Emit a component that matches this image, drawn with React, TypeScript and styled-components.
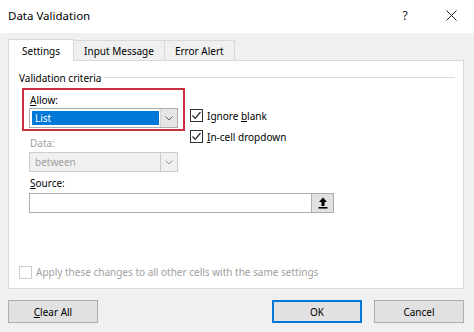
import * as React from 'react';
import styled, { createGlobalStyle, css } from 'styled-components';

const GlobalStyle = createGlobalStyle`
  html, body {
    margin: 0;
    padding: 0;
    background: #f0f0f0;
  }
  body {
    font-family: 'Noto Sans', 'Open Sans', sans-serif;
    font-size: 10px;
    color: #000;
  }
`;

const Window = styled.div`
  width: 474px;
  height: 332px;
  display: flex;
  flex-direction: column;
  background: #f0f0f0;
  overflow: hidden;
`;

const TitleBar = styled.div`
  height: 33px;
  background: #fff;
  display: flex;
  align-items: center;
  padding: 0 0 2px 8px;
  box-sizing: border-box;
`;

const Title = styled.div`
  flex: 1;
  font-size: 11.5px;
`;

const TitleButton = styled.div`
  width: 46px;
  display: flex;
  justify-content: center;
  align-items: center;
  font-size: 12px;
  color: #222;
`;

const Body = styled.div`
  flex: 1;
  display: flex;
  flex-direction: column;
  padding: 5px 10px 0 8px;
`;

const TabRow = styled.div`
  display: flex;
  align-items: flex-end;
  height: 22px;
`;

const Tab = styled.div<{ active?: boolean }>`
  box-sizing: border-box;
  height: ${p => (p.active ? 22 : 20)}px;
  padding: 0 ${p => (p.active ? 13 : 10)}px;
  display: flex;
  align-items: center;
  border: 1px solid #d9d9d9;
  border-bottom: none;
  background: ${p => (p.active ? '#fff' : '#f0f0f0')};
  margin-bottom: ${p => (p.active ? -1 : 0)}px;
  position: relative;
  z-index: ${p => (p.active ? 1 : 0)};
  ${p =>
    !p.active &&
    css`
      border-left: none;
    `}
`;

const Panel = styled.div`
  box-sizing: border-box;
  height: 229px;
  background: #fff;
  border: 1px solid #d9d9d9;
  padding: 9px 8px 8px 10px;
  display: flex;
  flex-direction: column;
`;

const GroupHeader = styled.div`
  display: flex;
  align-items: center;
  gap: 3px;
  line-height: 16px;
`;

const Rule = styled.div`
  flex: 1;
  height: 1px;
  background: #dcdcdc;
  margin-top: -1px;
`;

const CriteriaRow = styled.div`
  display: flex;
  align-items: flex-start;
  margin-top: 2px;
  padding-left: 3px;
`;

const Annotation = styled.div`
  box-sizing: border-box;
  width: 163px;
  border: 2px solid #c8303f;
  padding: 2px 5px 1px 5px;
`;

const FieldLabel = styled.div<{ disabled?: boolean }>`
  line-height: 16px;
  color: ${p => (p.disabled ? '#a0a0a0' : '#000')};
  padding-left: 1px;
`;

const SelectBox = styled.div<{ disabled?: boolean }>`
  box-sizing: border-box;
  width: 149px;
  height: 20px;
  border: 1px solid ${p => (p.disabled ? '#cccccc' : '#adadad')};
  background: ${p => (p.disabled ? '#f0f0f0' : '#fff')};
  display: flex;
  align-items: stretch;
`;

const SelectValue = styled.div<{ selected?: boolean; disabled?: boolean }>`
  flex: 1;
  display: flex;
  align-items: center;
  padding-left: 3px;
  margin: 2px 1px 2px 2px;
  color: ${p => (p.selected ? '#fff' : p.disabled ? '#a0a0a0' : '#000')};
  background: ${p => (p.selected ? '#0078d7' : 'transparent')};
`;

const DropButton = styled.div<{ disabled?: boolean }>`
  width: 16px;
  display: flex;
  align-items: center;
  justify-content: center;
  background: ${p => (p.disabled ? '#f0f0f0' : '#e5e5e5')};
  border-left: 1px solid ${p => (p.disabled ? '#cccccc' : '#d4d4d4')};
`;

const Checks = styled.div`
  display: flex;
  flex-direction: column;
  margin: 17px 0 -16px 5px;
`;

const CheckRow = styled.label<{ disabled?: boolean }>`
  display: flex;
  align-items: center;
  gap: 4px;
  height: 21px;
  color: ${p => (p.disabled ? '#a0a0a0' : '#000')};
`;

const Box = styled.span<{ disabled?: boolean }>`
  box-sizing: border-box;
  width: 13px;
  height: 13px;
  border: 1px solid ${p => (p.disabled ? '#cccccc' : '#333')};
  background: #fff;
  display: flex;
  align-items: center;
  justify-content: center;
`;

const Field = styled.div<{ top: number }>`
  margin-top: ${p => p.top}px;
  padding-left: 10px;
  display: flex;
  flex-direction: column;
  gap: 1px;
`;

const SourceRow = styled.div`
  display: flex;
  margin-top: 1px;
`;

const TextInput = styled.div`
  box-sizing: border-box;
  width: 283px;
  height: 20px;
  border: 1px solid #adadad;
  background: #fff;
`;

const PickButton = styled.div`
  box-sizing: border-box;
  width: 22px;
  height: 20px;
  border: 1px solid #adadad;
  border-left: none;
  background: #e1e1e1;
  display: flex;
  align-items: center;
  justify-content: center;
`;

const ApplyRow = styled(CheckRow)`
  margin-top: auto;
  height: 16px;
`;

const ButtonRow = styled.div`
  display: flex;
  margin-top: 11px;
  gap: 12px;
`;

const Button = styled.div<{ primary?: boolean }>`
  box-sizing: border-box;
  width: 90px;
  height: 23px;
  display: flex;
  align-items: center;
  justify-content: center;
  background: #e1e1e1;
  border: ${p => (p.primary ? '2px solid #0078d7' : '1px solid #adadad')};
`;

const Spacer = styled.div`
  flex: 1;
`;

const Chevron = ({ color = '#606060' }: { color?: string }) => (
  <svg width="8" height="5" viewBox="0 0 8 5">
    <polyline points="0.5,0.5 4,4 7.5,0.5" fill="none" stroke={color} strokeWidth="1" />
  </svg>
);

const Tick = () => (
  <svg width="11" height="11" viewBox="0 0 11 11">
    <polyline points="1.5,5.5 4.2,8.3 9.5,2" fill="none" stroke="#222" strokeWidth="1.2" />
  </svg>
);

const CloseGlyph = () => (
  <svg width="11" height="11" viewBox="0 0 11 11">
    <line x1="0.5" y1="0.5" x2="10.5" y2="10.5" stroke="#222" strokeWidth="1" />
    <line x1="10.5" y1="0.5" x2="0.5" y2="10.5" stroke="#222" strokeWidth="1" />
  </svg>
);

const CollapseIcon = () => (
  <svg width="10" height="12" viewBox="0 0 10 12">
    <polygon points="5,0.5 9,5 6.5,5 6.5,9 3.5,9 3.5,5 1,5" fill="#000" />
    <rect x="0.5" y="10" width="9" height="1.6" fill="#000" />
  </svg>
);

const App: React.FC = () => {
  return (
    <>
      <GlobalStyle />
      <Window>
        <TitleBar>
          <Title>Data Validation</Title>
          <TitleButton>?</TitleButton>
          <TitleButton>
            <CloseGlyph />
          </TitleButton>
        </TitleBar>
        <Body>
          <TabRow>
            <Tab active>Settings</Tab>
            <Tab>Input Message</Tab>
            <Tab>Error Alert</Tab>
          </TabRow>
          <Panel>
            <GroupHeader>
              Validation criteria
              <Rule />
            </GroupHeader>
            <CriteriaRow>
              <Annotation>
                <FieldLabel>
                  <u>A</u>llow:
                </FieldLabel>
                <SelectBox>
                  <SelectValue selected>List</SelectValue>
                  <DropButton>
                    <Chevron />
                  </DropButton>
                </SelectBox>
              </Annotation>
              <Checks>
                <CheckRow>
                  <Box>
                    <Tick />
                  </Box>
                  <span>
                    Ignore <u>b</u>lank
                  </span>
                </CheckRow>
                <CheckRow>
                  <Box>
                    <Tick />
                  </Box>
                  <span>
                    <u>I</u>n-cell dropdown
                  </span>
                </CheckRow>
              </Checks>
            </CriteriaRow>
            <Field top={4}>
              <FieldLabel disabled>Data:</FieldLabel>
              <SelectBox disabled>
                <SelectValue disabled>between</SelectValue>
                <DropButton disabled>
                  <Chevron color="#9a9a9a" />
                </DropButton>
              </SelectBox>
            </Field>
            <Field top={3}>
              <FieldLabel>
                <u>S</u>ource:
              </FieldLabel>
              <SourceRow>
                <TextInput />
                <PickButton>
                  <CollapseIcon />
                </PickButton>
              </SourceRow>
            </Field>
            <ApplyRow disabled>
              <Box disabled />
              <span>Apply these changes to all other cells with the same settings</span>
            </ApplyRow>
          </Panel>
          <ButtonRow>
            <Button>
              <span>
                <u>C</u>lear All
              </span>
            </Button>
            <Spacer />
            <Button primary>OK</Button>
            <Button>Cancel</Button>
          </ButtonRow>
        </Body>
      </Window>
    </>
  );
};

export default App;
